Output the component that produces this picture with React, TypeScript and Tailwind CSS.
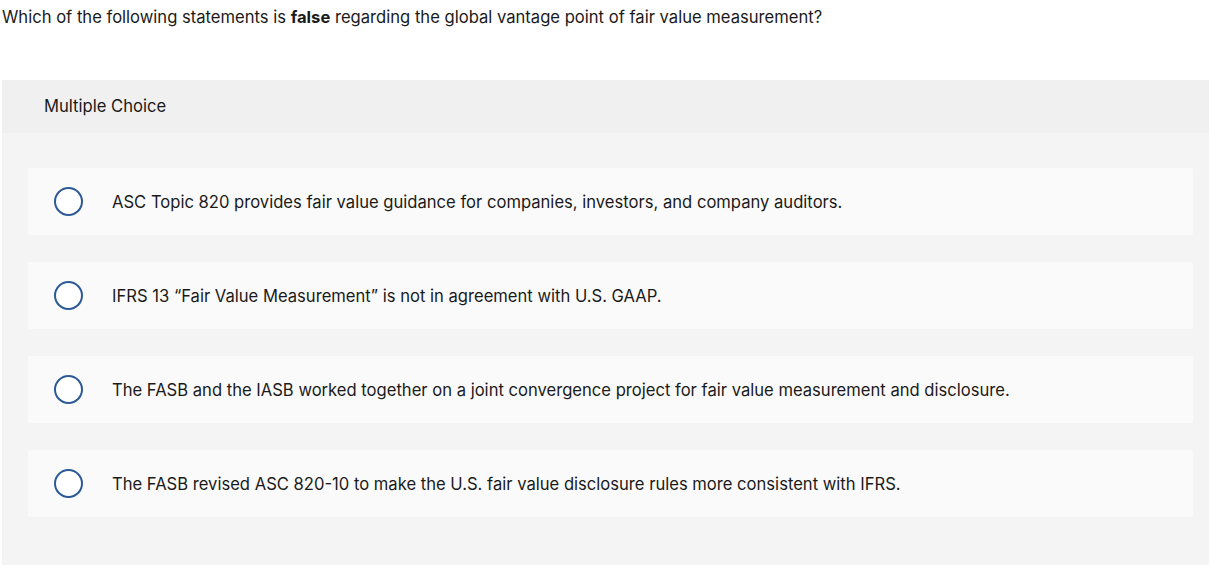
const options = [
  'ASC Topic 820 provides fair value guidance for companies, investors, and company auditors.',
  'IFRS 13 \u201cFair Value Measurement\u201d is not in agreement with U.S. GAAP.',
  'The FASB and the IASB worked together on a joint convergence project for fair value measurement and disclosure.',
  'The FASB revised ASC 820-10 to make the U.S. fair value disclosure rules more consistent with IFRS.',
];

export default function App() {
  return (
    <div className="min-h-[566px] bg-white font-['Inter',sans-serif] text-[#1a1a1a]">
      <p className="pl-[2px] pt-[7px] text-[16.6px] leading-[20px]">
        Which of the following statements is <strong className="font-bold">false</strong> regarding the global
        vantage point of fair value measurement?
      </p>

      <div className="ml-[2px] mr-px mt-[53px] bg-[#f4f4f4]">
        <div className="flex h-[53px] items-center bg-[#f0f0f0] pl-[42px] text-[16.6px]">Multiple Choice</div>
        <div className="flex flex-col gap-[27px] pb-[48px] pl-[26px] pr-[16px] pt-[35px]">
          {options.map((text) => (
            <label key={text} className="flex h-[67px] items-center rounded-[3px] bg-[#fafafa]">
              <span className="ml-[26px] h-[29px] w-[29px] shrink-0 rounded-full border-2 border-[#2c5a96] bg-white" />
              <span className="ml-[29px] pt-[2px] text-[16.6px]">{text}</span>
            </label>
          ))}
        </div>
      </div>
    </div>
  );
}
